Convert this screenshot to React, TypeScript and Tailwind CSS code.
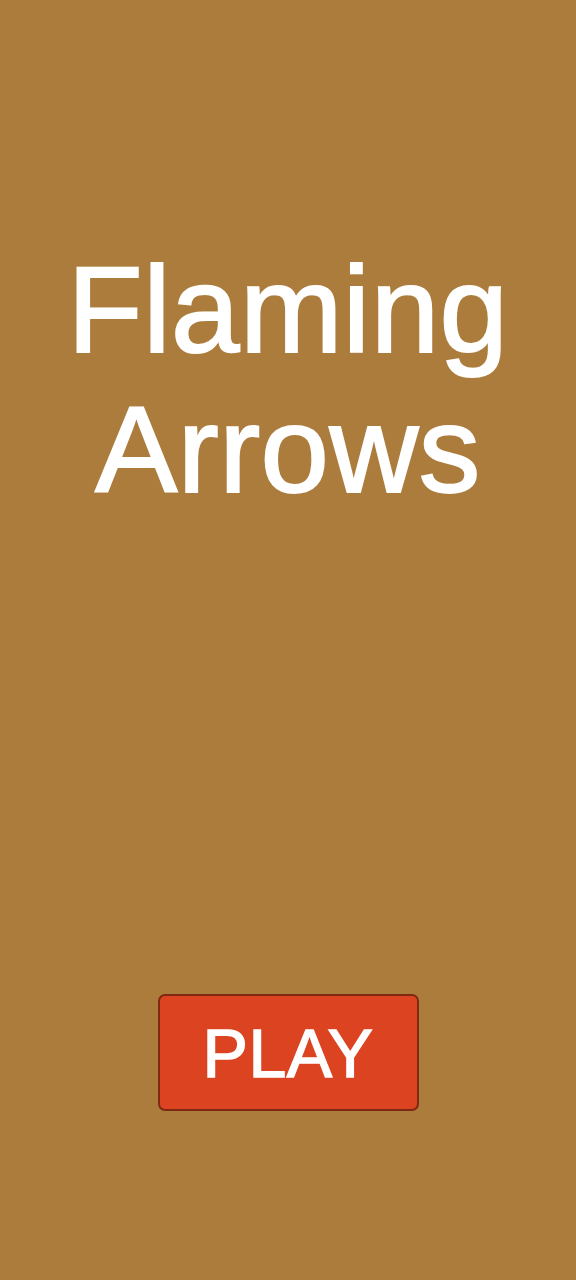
export default function App() {
  return (
    <div
      className="flex min-h-[1280px] w-full flex-col items-center bg-[#ac7c3d] pt-[240px]"
      style={{ fontFamily: '"Liberation Sans", Arial, sans-serif' }}
    >
      <h1 className="text-center text-[123px] font-normal leading-[140px] tracking-[0.5px] text-white [-webkit-text-stroke:2px_white]">
        Flaming
        <br />
        Arrows
      </h1>
      <button
        type="button"
        className="mt-[474px] flex h-[117px] w-[261px] items-center justify-center rounded-[7px] border-2 border-[#7e2a12] bg-[#dc4320] text-[68px] leading-none tracking-[0.5px] text-white [-webkit-text-stroke:1.5px_white]"
      >
        PLAY
      </button>
    </div>
  );
}
